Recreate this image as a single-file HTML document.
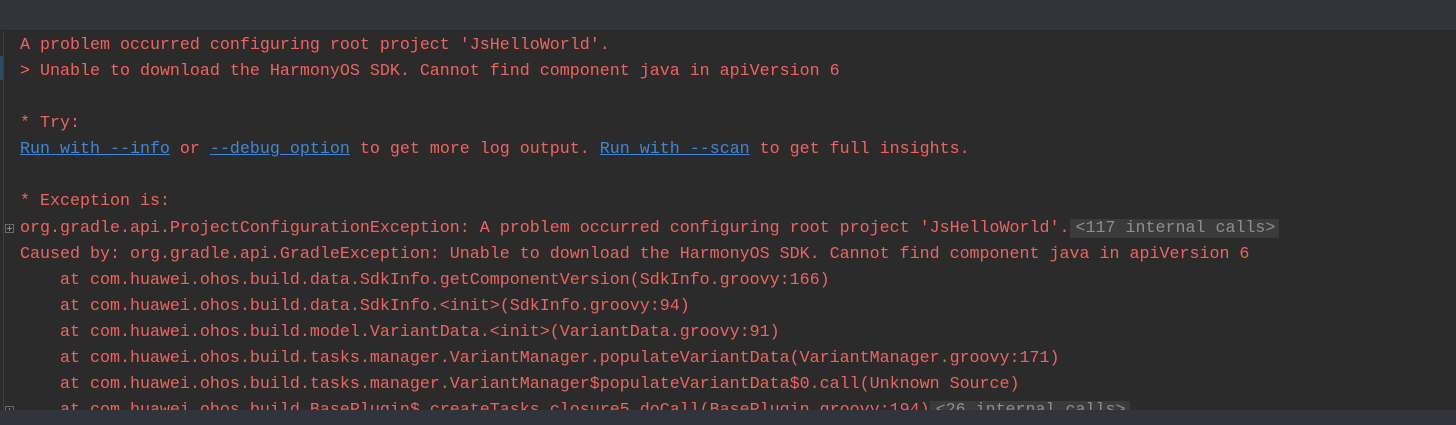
<!DOCTYPE html>
<html><head><meta charset="utf-8"><style>
html,body{margin:0;padding:0;}
body{width:1456px;height:425px;background:#2b2b2b;position:relative;overflow:hidden;font-family:"Liberation Mono",monospace;font-size:16.67px;}
.top{position:absolute;left:0;top:0;width:1456px;height:30px;background:#31343b;border-bottom:1px solid #25272b;}
.bot{position:absolute;left:0;top:410px;width:1456px;height:15px;background:#31343c;}
.gut{position:absolute;left:3px;top:31px;width:1px;height:380px;background:#3c3f41;}
.sel{position:absolute;left:0;top:56px;width:3px;height:24px;background:#2d4a66;}
.ln{position:absolute;left:20px;height:26px;line-height:26px;white-space:pre;color:#f0635d;}
a{color:#3d86d8;text-decoration:underline;}
.ic{background:#3b3b3c;color:#8d8d8d;padding:0 4px 0 6px;}
.pl{position:absolute;left:5px;width:9px;height:9px;border:1px solid #6a6a6a;box-sizing:border-box;}
.pl:before{content:"";position:absolute;left:1px;top:3px;width:5px;height:1px;background:#8a8a8a;}
.pl:after{content:"";position:absolute;left:3px;top:1px;width:1px;height:5px;background:#8a8a8a;}
</style></head><body>
<div class="top"></div>
<div class="gut"></div><div class="sel"></div>
<div class="ln" style="top:33px">A problem occurred configuring root project 'JsHelloWorld'.</div>
<div class="ln" style="top:59px">&gt; Unable to download the HarmonyOS SDK. Cannot find component java in apiVersion 6</div>
<div class="ln" style="top:111px">* Try:</div>
<div class="ln" style="top:137px"><a>Run with --info</a> or <a>--debug option</a> to get more log output. <a>Run with --scan</a> to get full insights.</div>
<div class="ln" style="top:189px">* Exception is:</div>
<div class="pl" style="top:224px"></div>
<div class="ln" style="top:216px">org.gradle.api.ProjectConfigurationException: A problem occurred configuring root project 'JsHelloWorld'.<span class="ic">&lt;117 internal calls&gt;</span></div>
<div class="ln" style="top:242px">Caused by: org.gradle.api.GradleException: Unable to download the HarmonyOS SDK. Cannot find component java in apiVersion 6</div>
<div class="ln" style="top:268px">    at com.huawei.ohos.build.data.SdkInfo.getComponentVersion(SdkInfo.groovy:166)</div>
<div class="ln" style="top:294px">    at com.huawei.ohos.build.data.SdkInfo.&lt;init&gt;(SdkInfo.groovy:94)</div>
<div class="ln" style="top:320px">    at com.huawei.ohos.build.model.VariantData.&lt;init&gt;(VariantData.groovy:91)</div>
<div class="ln" style="top:346px">    at com.huawei.ohos.build.tasks.manager.VariantManager.populateVariantData(VariantManager.groovy:171)</div>
<div class="ln" style="top:372px">    at com.huawei.ohos.build.tasks.manager.VariantManager$populateVariantData$0.call(Unknown Source)</div>
<div class="pl" style="top:406px"></div>
<div class="ln" style="top:398px">    at com.huawei.ohos.build.BasePlugin$_createTasks_closure5.doCall(BasePlugin.groovy:194)<span class="ic">&lt;26 internal calls&gt;</span></div>
<div class="bot"></div>
</body></html>
